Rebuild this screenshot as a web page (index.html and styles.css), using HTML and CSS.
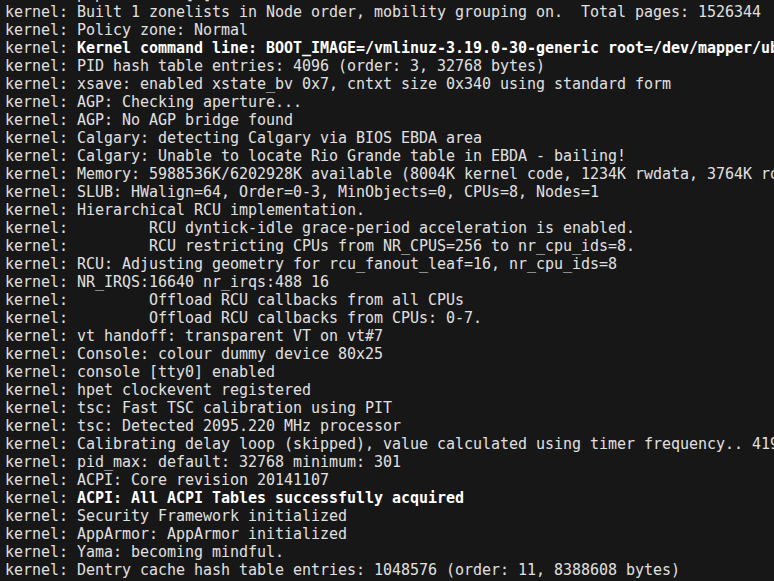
FILE: index.html
```html
<!DOCTYPE html>
<html>
<head>
<meta charset="utf-8">
<link rel="stylesheet" href="styles.css">
</head>
<body>
<pre class="term">kernel: pcpu-alloc: [0] 0 1 2 3 4 5 6 7
kernel: Built 1 zonelists in Node order, mobility grouping on.  Total pages: 1526344
kernel: Policy zone: Normal
kernel: <b class="hi">Kernel command line: BOOT_IMAGE=/vmlinuz-3.19.0-30-generic root=/dev/mapper/ubuntu--vg-root ro quiet splash</b>
kernel: PID hash table entries: 4096 (order: 3, 32768 bytes)
kernel: xsave: enabled xstate_bv 0x7, cntxt size 0x340 using standard form
kernel: AGP: Checking aperture...
kernel: AGP: No AGP bridge found
kernel: Calgary: detecting Calgary via BIOS EBDA area
kernel: Calgary: Unable to locate Rio Grande table in EBDA - bailing!
kernel: Memory: 5988536K/6202928K available (8004K kernel code, 1234K rwdata, 3764K rodata)
kernel: SLUB: HWalign=64, Order=0-3, MinObjects=0, CPUs=8, Nodes=1
kernel: Hierarchical RCU implementation.
kernel:         RCU dyntick-idle grace-period acceleration is enabled.
kernel:         RCU restricting CPUs from NR_CPUS=256 to nr_cpu_ids=8.
kernel: RCU: Adjusting geometry for rcu_fanout_leaf=16, nr_cpu_ids=8
kernel: NR_IRQS:16640 nr_irqs:488 16
kernel:         Offload RCU callbacks from all CPUs
kernel:         Offload RCU callbacks from CPUs: 0-7.
kernel: vt handoff: transparent VT on vt#7
kernel: Console: colour dummy device 80x25
kernel: console [tty0] enabled
kernel: hpet clockevent registered
kernel: tsc: Fast TSC calibration using PIT
kernel: tsc: Detected 2095.220 MHz processor
kernel: Calibrating delay loop (skipped), value calculated using timer frequency.. 4190.44 BogoMIPS (lpj=8380880)
kernel: pid_max: default: 32768 minimum: 301
kernel: ACPI: Core revision 20141107
kernel: <b class="hi">ACPI: All ACPI Tables successfully acquired</b>
kernel: Security Framework initialized
kernel: AppArmor: AppArmor initialized
kernel: Yama: becoming mindful.
kernel: Dentry cache hash table entries: 1048576 (order: 11, 8388608 bytes)</pre>
</body>
</html>
```

FILE: styles.css
```css
html, body {
  margin: 0;
  padding: 0;
  background: #171717;
  overflow: hidden;
  height: 100%;
}
.term {
  margin: -15px 0 0 0;
  padding: 0 0 0 5px;
  font-family: "DejaVu Sans Mono", monospace;
  font-size: 15px;
  letter-spacing: -0.03px;
  line-height: 18px;
  color: #e0e0e0;
  white-space: pre;
  tab-size: 8;
}
.hi {
  font-weight: bold;
  color: #ffffff;
}
```
